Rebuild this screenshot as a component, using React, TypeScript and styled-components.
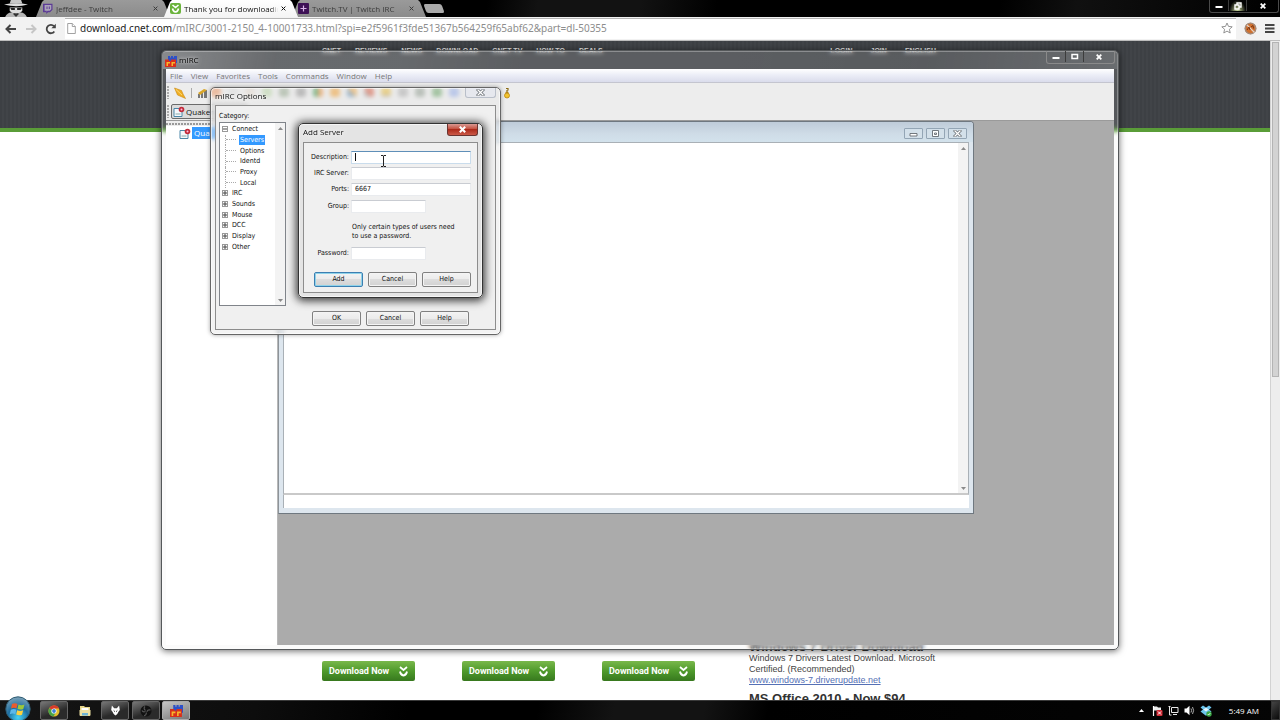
import React from "react";
import styled, { createGlobalStyle, css } from "styled-components";

const ui = `"Open Sans", "Noto Sans", sans-serif`;
const dialogFont = `"DejaVu Sans Condensed", "DejaVu Sans", sans-serif`;
const arial = `"Liberation Sans", Arial, sans-serif`;

const GlobalStyle = createGlobalStyle`
  * { box-sizing: border-box; }
  body { margin: 0; background: #000; font-family: ${ui}; font-size: 8px; color: #111; overflow: hidden; }
  button, input { font: inherit; color: inherit; margin: 0; padding: 0; border: 0; background: none; }
  ul { list-style: none; margin: 0; padding: 0; }
  svg { display: block; flex: none; }
`;

/* ---------- desktop ---------- */
const Desktop = styled.div`
  position: relative;
  display: flex;
  flex-direction: column;
  height: 100vh;
`;

const Browser = styled.section`
  flex: 1;
  min-height: 0;
  display: flex;
  flex-direction: column;
`;

/* ---------- browser chrome ---------- */
const TabStrip = styled.div`
  display: flex;
  align-items: flex-start;
  height: 17px;
  padding: 0 1px 0 4px;
  background: linear-gradient(100deg, #000 0 38%, #121212 42% 50%, #000 56% 78%, #101010 84%, #000);
`;

const Tabs = styled.div`
  display: flex;
  margin-left: 8px;
`;

const Tab = styled.div<{ $active?: boolean }>`
  display: flex;
  align-items: center;
  width: 134px;
  height: 17px;
  margin-right: -6px;
  padding: 0 12px 0 6px;
  position: relative;
  z-index: ${(p) => (p.$active ? 1 : 0)};
  clip-path: polygon(0 100%, 6px 2px, 8px 0, calc(100% - 8px) 0, calc(100% - 6px) 2px, 100% 100%);
  background: ${(p) => (p.$active ? "linear-gradient(#fff, #f4f4f4)" : "linear-gradient(#9a9a9a, #8b8b8b)")};
  color: ${(p) => (p.$active ? "#111" : "#3c3c3c")};
  font-size: 8px;
  line-height: 16px;
  gap: 3px;
`;

const TabTitle = styled.span`
  flex: 1;
  min-width: 0;
  white-space: nowrap;
  overflow: hidden;
  mask-image: linear-gradient(90deg, #000 92%, transparent);
`;

const PlainButton = styled.button`
  display: grid;
  place-items: center;
  cursor: pointer;
`;

const NewTab = styled.button`
  width: 18px;
  height: 9px;
  margin: 4px 0 0 5px;
  background: #aaa;
  border-radius: 2px;
  transform: skewX(20deg);
`;

const Caption = styled.div`
  display: flex;
  margin-left: auto;
  height: 13px;
  border: 1px solid #4a4a4a;
  border-top: 0;
  border-radius: 0 0 3px 3px;
`;

const CaptionButton = styled.button<{ $w: number; $glow?: boolean }>`
  display: grid;
  place-items: center;
  width: ${(p) => p.$w}px;
  height: 11px;
  color: #fff;
  & + & { border-left: 1px solid #3c3c3c; }
  ${(p) => p.$glow && css`background: radial-gradient(ellipse at 50% 110%, #d9e9a8, transparent 70%);`}
`;

const AddressRow = styled.div`
  display: flex;
  align-items: center;
  height: 24px;
  padding: 0 5px;
  gap: 8px;
  background: #f2f2f2;
  border-bottom: 1px solid #bdbdbd;
`;

const Omnibox = styled.div`
  flex: 1;
  display: flex;
  align-items: center;
  gap: 4px;
  height: 21px;
  padding: 0 3px 2px 2px;
  background: #fff;
  border-top: 1px solid #b5b5b5;
  font-family: "Noto Sans", sans-serif;
  font-size: 10px;
`;

const UrlText = styled.span`
  flex: 1;
  color: #8d8d8d;
  white-space: nowrap;
  b { font-weight: 400; color: #222; }
`;

/* ---------- web page ---------- */
const Viewport = styled.div`
  flex: 1;
  min-height: 0;
  display: flex;
`;

const Page = styled.main`
  flex: 1;
  min-width: 0;
  overflow: hidden;
  background: #fff;
`;

const SiteHeader = styled.header`
  display: flex;
  justify-content: space-between;
  height: 91px;
  padding: 6px 334px 0 322px;
  background: repeating-linear-gradient(90deg, #3d4044 0 2px, #414448 2px 4px);
  border-bottom: 4px solid #5a9d38;
  font: 700 7px/8px ${arial};
  color: #ececec;
`;

const SiteNav = styled.nav<{ $gap: number }>`
  display: flex;
  gap: ${(p) => p.$gap}px;
  a { color: inherit; text-decoration: none; }
`;

const Listing = styled.div`
  display: flex;
  padding: 509px 0 0 322px;
`;

const Downloads = styled.div`
  display: flex;
  gap: 47px;
  width: 427px;
  padding-top: 20px;
`;

const DownloadButton = styled.button`
  display: flex;
  align-items: center;
  justify-content: space-between;
  width: 93px;
  height: 20px;
  padding: 0 7px;
  border-radius: 2px;
  background: linear-gradient(#79b84b, #4f9a2c 50%, #37781e);
  color: #fff;
  font: 700 9px/20px Roboto, sans-serif;
`;

const Ads = styled.aside`
  font: 9px/11px ${arial};
  color: #444;
  white-space: nowrap;
  h3 { margin: 0; font-size: 13px; line-height: 12px; color: #333; }
  p { margin: 0; }
  a { color: #5570b5; }
  h3 + p { margin-bottom: 7px; }
`;

const ScrollTrack = styled.div`
  width: 10px;
  padding: 1px;
  background: #ededed;
  border-left: 1px solid #d2d2d2;
`;

const ScrollThumb = styled.div`
  height: 335px;
  background: #d3d3d3;
  border: 1px solid #b4b4b4;
`;

/* ---------- windows ---------- */
const AppWindow = styled.section`
  position: absolute;
  left: 161px;
  top: 50px;
  right: 161px;
  bottom: 70px;
  display: flex;
  flex-direction: column;
  padding: 0 4px 4px;
  border: 1px solid #55585a;
  border-radius: 5px;
  background: rgba(226, 226, 226, 0.14);
  backdrop-filter: blur(2px);
  box-shadow: inset 0 0 0 1px rgba(255, 255, 255, 0.3), 0 1px 7px rgba(0, 0, 0, 0.6);
`;

const AppTitle = styled.header`
  display: flex;
  align-items: flex-start;
  height: 18px;
  gap: 2px;
  margin: 0 -3px;
  padding: 0 2px;
  border-radius: 4px 4px 0 0;
  background: linear-gradient(100deg, rgba(255, 255, 255, 0.3), rgba(255, 255, 255, 0.1) 12% 25%, rgba(255, 255, 255, 0.03) 38% 60%, rgba(255, 255, 255, 0.02) 80%, rgba(255, 255, 255, 0.12));
  font-size: 8px;
  line-height: 18px;
  color: #000;
  svg { margin-top: 4px; }
`;

const TitleText = styled.span`
  text-shadow: 0 0 5px rgba(255, 255, 255, 0.8), 0 0 3px rgba(255, 255, 255, 0.5);
`;

const AppCaption = styled(Caption)`
  border-color: #8a8a8a;
  svg { margin: 0; }
  button { border-color: #777; }
`;

const AppBody = styled.div`
  flex: 1;
  min-height: 0;
  display: flex;
  flex-direction: column;
  background: #ededed;
`;

const MenuBar = styled.nav`
  display: flex;
  align-items: center;
  gap: 8px;
  height: 14px;
  padding-left: 4px;
  background: linear-gradient(#fff, #eef0f8 40%, #dadcec);
  border-bottom: 1px solid #c4c5cf;
  color: #777;
  font-size: 8px;
  line-height: 12px;
`;

const ToolBar = styled.div`
  display: flex;
  align-items: center;
  height: 19px;
  padding: 0 4px 0 1px;
`;

const Grip = styled.i<{ $gap: number }>`
  width: 3px;
  height: 13px;
  margin-right: ${(p) => p.$gap}px;
  background: radial-gradient(circle at 1px 1px, #aaa 1px, transparent 1px) 0 0 / 3px 3px;
`;

const ToolSet = styled.div`
  display: flex;
  gap: 7px;
  margin: 0 44px 0 2px;
`;

const ToolIcon = styled.button<{ $c: string }>`
  width: 10px;
  height: 9px;
  border-radius: 3px;
  background: ${(p) => p.$c};
`;

const Separator = styled.i`
  width: 1px;
  height: 10px;
  margin: 0 5px;
  background: #aaa;
`;

const SwitchBar = styled(ToolBar)`
  border-bottom: 1px solid #9a9a9a;
`;

const SwitchButton = styled.button`
  display: flex;
  align-items: center;
  gap: 1px;
  width: 76px;
  height: 15px;
  padding-left: 1px;
  border: 1px solid #6b6b6b;
  border-radius: 2px;
  background: #dcdcdc;
`;

const Workspace = styled.div`
  flex: 1;
  min-height: 0;
  display: flex;
`;

const TreePane = styled.aside`
  width: 112px;
  background: #fff;
  border-right: 1px solid #b8b8b8;
`;

const PaneGrip = styled.div`
  height: 5px;
  background: radial-gradient(circle at 1px 1px, #999 1px, transparent 1px) 0 2px / 3px 6px #ededed;
`;

const NetworkItem = styled.div`
  display: flex;
  align-items: center;
  gap: 1px;
  padding: 1px 0 0 13px;
  span { flex: none; width: 60px; padding-left: 2px; background: #3399ff; color: #fff; line-height: 12px; }
`;

const Mdi = styled.div`
  flex: 1;
  min-width: 0;
  background: #ababab;
`;

const ChildWindow = styled.section`
  display: flex;
  flex-direction: column;
  width: 696px;
  height: 393px;
  padding: 0 4px 5px;
  border: 1px solid #6f7880;
  border-left-color: #8d949a;
  border-radius: 0 4px 0 0;
  background: #dde6ee;
`;

const ChildTitle = styled.header`
  display: flex;
  justify-content: flex-end;
  align-items: center;
  gap: 3px;
  height: 20px;
  margin: 0 -4px;
  padding: 2px 6px 0 0;
  border-radius: 0 3px 0 0;
  background: linear-gradient(#bfccd9, #cfdce7 60%, #d3e2ec);
`;

const ChildButton = styled.button`
  display: grid;
  place-items: center;
  width: 19px;
  height: 11px;
  border: 1px solid #93a5b5;
  border-radius: 1px;
  background: #d3e0ea;
  color: #596670;
`;

const ChatArea = styled.div`
  flex: 1;
  display: flex;
  justify-content: flex-end;
  background: #fff;
  border: 1px solid #a9b0b6;
  border-bottom: 2px solid #c9c9c9;
`;

const ArrowBar = styled.div`
  display: flex;
  flex-direction: column;
  align-items: center;
  justify-content: space-between;
  width: 10px;
  padding: 4px 0 3px;
  background: #f3f3f3;
  color: #8a8a8a;
`;

const ChatInput = styled.input`
  width: 100%;
  height: 13px;
  background: #fff;
  border-left: 1px solid #a9b0b6;
`;

/* ---------- dialogs ---------- */
const Dialog = styled.section<{ $x: number; $y: number; $w: number; $h: number; $deep?: boolean }>`
  position: absolute;
  left: ${(p) => p.$x}px;
  top: ${(p) => p.$y}px;
  width: ${(p) => p.$w}px;
  height: ${(p) => p.$h}px;
  display: flex;
  flex-direction: column;
  padding: 0 4px 4px;
  border: 1px solid ${(p) => (p.$deep ? "#333" : "#666")};
  border-radius: 5px;
  background: ${(p) => (p.$deep ? "rgba(226, 226, 226, 0.85)" : "rgba(232, 232, 232, 0.5)")};
  backdrop-filter: blur(2px);
  box-shadow: inset 0 0 0 1px rgba(255, 255, 255, 0.6),
    ${(p) => (p.$deep ? "0 1px 9px 2px rgba(0, 0, 0, 0.75)" : "0 0 4px rgba(0, 0, 0, 0.35)")};
`;

const DialogTitle = styled.header`
  display: flex;
  justify-content: space-between;
  align-items: flex-start;
  height: 18px;
  font-size: 8px;
  color: #111;
  h2 { margin: 0; font: inherit; line-height: 16px; text-shadow: 0 0 5px #fff; }
`;

const DialogClose = styled.button<{ $red?: boolean }>`
  display: grid;
  place-items: center;
  width: 31px;
  height: ${(p) => (p.$red ? 12 : 10)}px;
  border-radius: 0 0 3px 3px;
  border: 1px solid ${(p) => (p.$red ? "#6b3430" : "#b9bfc9")};
  border-top: 0;
  color: ${(p) => (p.$red ? "#fff" : "#4c4c4c")};
  background: ${(p) => (p.$red ? "linear-gradient(#d99a93, #c5503f 45%, #ac2b1b 50%, #cc5a48)" : "rgba(226, 230, 240, 0.6)")};
`;

const DialogBody = styled.div`
  flex: 1;
  display: flex;
  flex-direction: column;
  background: #f0f0f0;
  border: 1px solid #8d8d8d;
  font-family: ${dialogFont};
  font-size: 7px;
  line-height: 9px;
`;

const OptionsBody = styled(DialogBody)`
  padding: 6px 3px 3px;
`;

const CategoryBox = styled.div`
  display: flex;
  justify-content: space-between;
  width: 67px;
  height: 184px;
  margin-top: 1px;
  border: 1px solid #80848a;
  background: #fff;
`;

const CategoryTree = styled.ul`
  display: grid;
  grid-auto-rows: 1fr;
  height: 129px;
  padding: 1px 0 0 2px;
`;

const Node = styled.li<{ $child?: boolean; $selected?: boolean }>`
  display: flex;
  align-items: center;
  gap: 3px;
  ${(p) => p.$child && css`
    margin-left: 3px;
    border-left: 1px dotted #aaa;
    &::before { content: ""; width: 10px; border-top: 1px dotted #aaa; }
  `}
  span { padding: 0 1px; line-height: 10px; ${(p) => p.$selected && css`background: #3399ff; color: #fff;`} }
`;

const Expander = styled.button`
  display: grid;
  place-items: center;
  width: 6px;
  height: 6px;
  border: 1px solid #999;
  background: #fff;
`;

const ButtonRow = styled.div<{ $left: number; $top: number }>`
  display: flex;
  gap: 5px;
  margin: ${(p) => p.$top}px 0 0 ${(p) => p.$left}px;
`;

const PushButton = styled.button<{ $primary?: boolean }>`
  width: 49px;
  height: 15px;
  border: 1px solid ${(p) => (p.$primary ? "#3c7fb1" : "#808080")};
  border-radius: 2px;
  background: linear-gradient(#f3f3f3, #ebebeb 50%, #dddddd 50%, #d2d2d2);
  box-shadow: inset 0 0 0 1px ${(p) => (p.$primary ? "#8fd3ea" : "#f4f4f4")};
  text-align: center;
`;

const Form = styled.form`
  display: grid;
  grid-template-columns: 45px 120px;
  grid-template-rows: 16px 16px 16px 18px;
  column-gap: 2px;
  align-items: center;
  padding-top: 6px;
  label { text-align: right; white-space: nowrap; justify-self: end; }
`;

const TextBox = styled.input<{ $short?: boolean }>`
  width: ${(p) => (p.$short ? 75 : 120)}px;
  height: 13px;
  padding: 0 3px;
  background: #fff;
  border: 1px solid #e9ebee;
  border-top-color: #c9ccd2;
  outline: 0;
  &:focus, &#desc { border-color: #c9dcec; border-top-color: #5f8fb8; }
`;

const CaretField = styled.div`
  position: relative;
`;

const Caret = styled.i`
  position: absolute;
  left: 4px;
  top: 2px;
  width: 1px;
  height: 8px;
  background: #111;
`;

const IBeam = styled.svg`
  position: absolute;
  left: 29px;
  top: 4px;
`;

const Note = styled.p`
  grid-column: 2;
  margin: 8px 0 6px 1px;
`;

/* ---------- taskbar ---------- */
const Taskbar = styled.footer`
  position: relative;
  display: flex;
  align-items: center;
  height: 20px;
  padding-left: 5px;
  background: linear-gradient(100deg, #151515, #0d0d0d 20%, #000 32% 42%, #131313 48% 55%, #000 60%, #050505);
  border-top: 1px solid #3a3a3a;
  color: #fff;
`;

const StartOrb = styled.button`
  width: 26px;
  height: 26px;
  margin: -4px 9px 0 0;
`;

const TaskButton = styled.button<{ $state?: "open" | "active" }>`
  display: grid;
  place-items: center;
  width: 28px;
  height: 19px;
  ${(p) => p.$state && css`
    border: 1px solid ${p.$state === "active" ? "#aaa" : "#666"};
    border-radius: 2px;
    background: ${p.$state === "active" ? "linear-gradient(160deg, #c5c5c5, #777)" : "linear-gradient(160deg, #777, #2a2a2a 60%)"};
  `}
`;

const TaskButtons = styled.div`
  display: flex;
  justify-content: space-between;
  width: 150px;
`;

const Tray = styled.div`
  display: flex;
  align-items: center;
  gap: 5px;
  height: 100%;
  margin-left: auto;
  time { margin: 0 7px 0 12px; font-size: 8px; white-space: nowrap; }
`;

const ShowHidden = styled.button`
  margin-right: 3px;
`;

const ShowDesktop = styled.button`
  width: 9px;
  height: 19px;
  background: linear-gradient(135deg, #444, #0a0a0a);
  border: 1px solid #333;
`;

/* ---------- icons ---------- */
const Cross = ({ s = 6, w = 1.6 }: { s?: number; w?: number }) => (
  <svg width={s} height={s} viewBox="0 0 6 6" stroke="currentColor" strokeWidth={w}>
    <path d="M.7.7l4.600 4.600M5.300.7L.7 5.300" />
  </svg>
);
const OutlineCross = () => (
  <svg width="9" height="7" viewBox="0 0 9 7">
    <path d="M2 1l5 5M7 1l-5 5" stroke="#646a70" strokeWidth="2.800" strokeLinecap="square" />
    <path d="M2 1l5 5M7 1l-5 5" stroke="#fff" strokeWidth="1.300" strokeLinecap="square" />
  </svg>
);
const OutlineMin = () => (
  <svg width="9" height="7" viewBox="0 0 9 7"><path d="M1 3.500h7v2.500H1z" fill="#fff" stroke="#646a70" strokeWidth=".9" /></svg>
);
const OutlineMax = () => (
  <svg width="9" height="7" viewBox="0 0 9 7"><path d="M1.500.5h6v6h-6zM3.500 3h2v1.500h-2z" fill="#fff" stroke="#646a70" strokeWidth=".9" /></svg>
);
const Min = () => (
  <svg width="8" height="7" viewBox="0 0 8 7"><path d="M.5 4h7v2h-7z" fill="currentColor" /></svg>
);
const Max = () => (
  <svg width="8" height="7" viewBox="0 0 8 7"><path d="M1 1.500h5.500v4H1z" fill="none" stroke="currentColor" strokeWidth="1.500" /></svg>
);
const Restore = () => (
  <svg width="8" height="8" viewBox="0 0 8 8" fill="none" stroke="currentColor" strokeWidth="1.400">
    <path d="M1 3h4v4H1zM3 3V1h4v4H5" />
  </svg>
);
const Tri = ({ down }: { down?: boolean }) => (
  <svg width="5" height="3" viewBox="0 0 5 3"><path d={down ? "M0 0h5L2.500 3z" : "M0 3h5L2.500 0z"} fill="currentColor" /></svg>
);
const Incognito = () => (
  <svg width="24" height="17" viewBox="0 0 21 17" preserveAspectRatio="none">
    <path d="M6 0h9l1 3.500H5z" fill="#c8c8c8" />
    <path d="M0 4.500q10.500-2.500 21 0-10 3.500-21 0z" fill="#dedede" />
    <path d="M5 7.500h11v3q-1 3-5.500 3T5 10.500z" fill="#ddd" />
    <path d="M5.500 8h4v2h-3zM11.500 8h4l-1 2h-3z" fill="#222" />
    <path d="M1 17q2-5 6-4.500l3.500 2.500 3.500-2.500q4-.5 6 4.500z" fill="#b5b5b5" />
    <path d="M8 14l2.500 3 2.500-3" fill="#333" />
  </svg>
);
const TwitchIcon = () => (
  <svg width="11" height="11" viewBox="0 0 11 11">
    <path d="M1 .8h9.500v6L8 9.200H6L4.300 11V9.200H1z" fill="#5c3b96" />
    <path d="M2.600 2h6.700v4.200L7.800 7.700H5.600L4.600 8.700v-1h-2z" fill="#aaa2b8" />
    <path d="M5 3.500v2.500M7.300 3.500v2.500" stroke="#5c3b96" />
  </svg>
);
const CnetIcon = () => (
  <svg width="11" height="11" viewBox="0 0 11 11">
    <rect width="11" height="11" rx="2" fill="#6bb33c" />
    <path d="M2.500 2l3 2.500 3-2.500M2.500 5.500q.5 3 3 3.500 2.500-.5 3-3.500" fill="none" stroke="#fff" strokeWidth="1.600" />
  </svg>
);
const PlusIcon = () => (
  <svg width="11" height="11" viewBox="0 0 11 11">
    <rect width="11" height="11" rx="1" fill="#3d1155" />
    <path d="M5.500 2.500v6M2.500 5.500h6" stroke="#d9b5ea" strokeWidth="1.200" />
  </svg>
);
const Arrow = ({ back }: { back?: boolean }) => (
  <svg width="12" height="10" viewBox="0 0 12 10" fill="none" stroke={back ? "#444" : "#c6c6c6"} strokeWidth="2">
    <path d={back ? "M11 5H2M5.500 1L1.500 5l4 4" : "M1 5h9M6.500 1l4 4-4 4"} />
  </svg>
);
const Reload = () => (
  <svg width="12" height="12" viewBox="0 0 12 12">
    <path d="M9.300 8.500A4.200 4.200 0 1 1 9 3.200" fill="none" stroke="#444" strokeWidth="1.800" />
    <path d="M10.800.8v4.400H6.400z" fill="#444" />
  </svg>
);
const PageIcon = () => (
  <svg width="9" height="11" viewBox="0 0 9 11" fill="#fff" stroke="#999" strokeWidth=".9">
    <path d="M.7.500h4.600L8.300 3.500v7H.7z" /><path d="M5.300.5v3h3" />
  </svg>
);
const Star = () => (
  <svg width="12" height="12" viewBox="0 0 12 12">
    <path d="M6 1l1.500 3.400 3.700.4-2.800 2.500.8 3.700L6 9.100 2.800 11l.8-3.700L.8 4.800l3.700-.4z" fill="#fff" stroke="#888" strokeWidth=".9" />
  </svg>
);
const Cookie = () => (
  <svg width="13" height="13" viewBox="0 0 13 13">
    <circle cx="6.500" cy="6.500" r="5.800" fill="#d0712f" />
    <circle cx="6.500" cy="6.500" r="5.300" fill="none" stroke="#a08a7c" strokeWidth="1.300" />
    <path d="M3 3l7.500 7.500" stroke="#e6d2c4" strokeWidth="1.300" />
    <path d="M3 8l2-3 1 3M7 5l2-1.500.5 3" stroke="#7a3410" strokeWidth="1" fill="none" />
  </svg>
);
const MenuIcon = () => (
  <svg width="10" height="9" viewBox="0 0 10 9"><path d="M0 1h9.500M0 4.500h9.500M0 8h9.500" stroke="#444" strokeWidth="2" /></svg>
);
const MircIcon = ({ s = 11 }: { s?: number }) => (
  <svg width={s} height={s} viewBox="0 0 12 12">
    <path d="M3 1h2v1.500h1V1h2v1.500h1V1h3v7H3z" fill="#2d50c8" />
    <path d="M0 4.500h4V6h2V4.500h5V12H0z" fill="#d8301c" />
    <path d="M1.500 7H5v1.500H3V11H1.500zM6.500 7H10v1.500H8V11H6.500z" fill="#f7b52c" />
  </svg>
);
const Feather = () => (
  <svg width="12" height="12" viewBox="0 0 12 12">
    <path d="M.5 1l7 2.500L9 7l2.500 4.500L7 9.500 3.500 8z" fill="#f0ae22" stroke="#c98a14" strokeWidth=".6" />
    <path d="M2 2.500l6 5.500" stroke="#fbe08a" strokeWidth=".8" />
  </svg>
);
const ChartIcon = () => (
  <svg width="12" height="10" viewBox="0 0 12 10">
    <path d="M1 6h2v4H1zM4 4h2v6H4zM7 2h3v8H7z" fill="#777" /><path d="M1 5l6-4 3 1-7 5z" fill="#d9a528" />
  </svg>
);
const StatusIcon = () => (
  <svg width="12" height="11" viewBox="0 0 12 11">
    <path d="M1 2.500h8v8H1z" fill="#f5f8fb" stroke="#4b87a8" /><path d="M2.500 8h5" stroke="#8aa" />
    <circle cx="8.500" cy="3.500" r="2.800" fill="#c22c3a" /><circle cx="8.500" cy="3.500" r="1" fill="#fbd" />
  </svg>
);
const KeyIcon = () => (
  <svg width="8" height="12" viewBox="0 0 8 12">
    <circle cx="4" cy="8.500" r="2.500" fill="#f2c42e" stroke="#b98512" strokeWidth=".8" />
    <path d="M2.500 5.500h3" stroke="#b98512" strokeWidth="1.200" />
    <path d="M4 5V3M3 1.500h2v2" stroke="#8a6a14" strokeWidth="1.200" fill="none" />
  </svg>
);
const DoubleDown = () => (
  <svg width="9" height="11" viewBox="0 0 9 11" fill="none" stroke="#fff" strokeWidth="1.800">
    <path d="M1 1l3.500 3L8 1" /><path d="M1 5.500q.5 3.500 3.500 4 3-.5 3.500-4" />
  </svg>
);
const Orb = () => (
  <svg width="26" height="26" viewBox="0 0 26 26">
    <defs>
      <radialGradient id="orb" cx="50%" cy="85%" r="85%">
        <stop offset="0" stopColor="#46d3f5" /><stop offset=".5" stopColor="#1c6ea2" /><stop offset="1" stopColor="#7fa3b8" />
      </radialGradient>
    </defs>
    <circle cx="13" cy="13" r="12.200" fill="url(#orb)" stroke="#2d5b72" strokeWidth="1" />
    <path d="M7 8q3-1.500 5.500 0l-1 4.500q-2.500-1.500-5.500 0z" fill="#ea5b2d" />
    <path d="M13.500 8.500q3 1.500 6 0l-1.200 4.500q-3 1.300-5.800-.2z" fill="#9cc83c" />
    <path d="M5.800 13.700q3-1.500 5.500 0l-1 4.500q-2.500-1.500-5.500 0z" fill="#5bb8ea" />
    <path d="M12.200 14.200q3 1.500 6 0L17 18.700q-3 1.300-5.800-.2z" fill="#fbd13e" />
  </svg>
);
const Chrome = () => (
  <svg width="12" height="12" viewBox="0 0 12 12">
    <circle cx="6" cy="6" r="5.500" fill="#e2bf2c" />
    <path d="M6 6L1.200 3.200A5.500 5.500 0 0 1 11 3.500H6z" fill="#d93a2b" />
    <path d="M6 6L1.200 3.200A5.500 5.500 0 0 0 5.500 11.500L8 7z" fill="#48a347" />
    <circle cx="6" cy="6" r="2.600" fill="#fff" /><circle cx="6" cy="6" r="1.900" fill="#3d7fd6" />
  </svg>
);
const Folder = () => (
  <svg width="12" height="11" viewBox="0 0 12 11">
    <path d="M1 1h4l1 1h5v9H1z" fill="#e5d58a" /><path d="M2.500 3h7v4h-7z" fill="#fff" /><path d="M.5 5h11v5.500H.5z" fill="#efe2a3" /><path d="M3 8h6v2.500H3z" fill="#6fb5d6" />
  </svg>
);
const Fox = () => (
  <svg width="9" height="11" viewBox="0 0 10 11">
    <path d="M1 0l2.500 3h3L9 0l.8 5-1.300 1.500L7 9.500 5 11 3 9.500 1.500 6.500.2 5z" fill="#fff" /><path d="M2.500 4.500l2 2-.5 1zM7.500 4.500l-2 2 .5 1z" fill="#222" />
  </svg>
);
const Obs = () => (
  <svg width="12" height="12" viewBox="0 0 12 12">
    <circle cx="6" cy="6" r="5.500" fill="#111" />
    <path d="M5 1.500q-2 2 .5 4M10.500 5q-2.700-.7-3.700 1.700M4 10.500q2 .3 2.500-3M2 5.500q1 2 3.500 1" fill="none" stroke="#555" strokeWidth="1.200" />
  </svg>
);
const Flag = () => (
  <svg width="11" height="11" viewBox="0 0 11 11">
    <path d="M1.500 1v10" stroke="#fff" strokeWidth="1.200" /><path d="M2 1.500h3l1 1h3v4H6l-1-1H2z" fill="#eee" />
    <rect x="4.500" y="5" width="6" height="6" rx="1" fill="#d42a35" /><path d="M6 6.500l3 3M9 6.500l-3 3" stroke="#fff" />
  </svg>
);
const Network = () => (
  <svg width="11" height="11" viewBox="0 0 11 11" fill="none" stroke="#e8e8e8">
    <path d="M3.500 2.500h6.500v5H3.500zM5 9.500h4M1.500 1v4M.5 1.500h2M1.500 5v5h2" />
  </svg>
);
const Volume = () => (
  <svg width="11" height="11" viewBox="0 0 11 11">
    <path d="M.5 3.500h2L5.500.8v9.400L2.500 7.500h-2z" fill="#fff" /><path d="M7 3.500q1.200 2 0 4M8.500 2q2.200 3.500 0 7" fill="none" stroke="#bbb" strokeWidth=".9" />
  </svg>
);
const Dropbox = () => (
  <svg width="12" height="12" viewBox="0 0 12 12">
    <path d="M3 .5l3 2 3-2 2.500 2L9 4.500l2.500 2L9 8.500l-3 2.300-3-2.300L.5 6.500 3 4.500.5 2.500z" fill="#6cc4ec" /><path d="M6 2.800l2.800 1.800L6 6.500 3.200 4.600z" fill="#e9f7ff" />
    <circle cx="9" cy="9" r="2.700" fill="#3ba845" /><path d="M7.700 9l1 1 1.600-2" fill="none" stroke="#fff" strokeWidth=".8" />
  </svg>
);

/* ---------- data ---------- */
const menu = ["File", "View", "Favorites", "Tools", "Commands", "Window", "Help"];
const toolColors = ["#ee8a4f", "#dcdcdc", "#e2d8cc", "#b5d6a0", "#8fa387", "#8d8d8d", "linear-gradient(90deg, #1f8a35 40%, #f0801e 60%)", "#f29a24", "linear-gradient(45deg, #4c83b5 35%, #f5a02c 60%)", "linear-gradient(45deg, #999 20%, #d8492a 50%)", "linear-gradient(#eab82c 60%, #999)", "#a8a8a8", "#8b988b", "#5f9f5c", "#8ea8ea"];
const subCategories = ["Servers", "Options", "Identd", "Proxy", "Local"];
const categories = ["IRC", "Sounds", "Mouse", "DCC", "Display", "Other"];

const TabItem = ({ icon, title, active }: { icon: React.ReactNode; title: string; active?: boolean }) => (
  <Tab $active={active}>
    {icon}
    <TabTitle>{title}</TabTitle>
    <PlainButton aria-label={`Close ${title}`}><Cross s={5} w={1.2} /></PlainButton>
  </Tab>
);

const BrowserWindow = () => (
  <Browser>
    <TabStrip>
      <Incognito />
      <Tabs>
        <TabItem icon={<TwitchIcon />} title="Jeffdee - Twitch" />
        <TabItem icon={<CnetIcon />} title="Thank you for downloadin" active />
        <TabItem icon={<PlusIcon />} title="Twitch.TV | Twitch IRC" />
      </Tabs>
      <NewTab aria-label="New tab" />
      <Caption>
        <CaptionButton $w={18} aria-label="Minimize"><Min /></CaptionButton>
        <CaptionButton $w={18} $glow aria-label="Restore"><Restore /></CaptionButton>
        <CaptionButton $w={32} aria-label="Close"><Cross w={1.8} /></CaptionButton>
      </Caption>
    </TabStrip>
    <AddressRow>
      <PlainButton aria-label="Back"><Arrow back /></PlainButton>
      <PlainButton aria-label="Forward"><Arrow /></PlainButton>
      <PlainButton aria-label="Reload"><Reload /></PlainButton>
      <Omnibox>
        <PageIcon />
        <UrlText><b>download.cnet.com</b>/mIRC/3001-2150_4-10001733.html?spi=e2f5961f3fde51367b564259f65abf62&amp;part=dl-50355</UrlText>
        <PlainButton aria-label="Bookmark"><Star /></PlainButton>
      </Omnibox>
      <PlainButton aria-label="Extension"><Cookie /></PlainButton>
      <PlainButton aria-label="Menu"><MenuIcon /></PlainButton>
    </AddressRow>
    <Viewport>
      <Page>
        <SiteHeader>
          <SiteNav $gap={14}>
            {["CNET", "REVIEWS", "NEWS", "DOWNLOAD", "CNET TV", "HOW TO", "DEALS"].map((t) => <a key={t} href="#">{t}</a>)}
          </SiteNav>
          <SiteNav $gap={18}>
            {["LOGIN", "JOIN", "ENGLISH"].map((t) => <a key={t} href="#">{t}</a>)}
          </SiteNav>
        </SiteHeader>
        <Listing>
          <Downloads>
            {[0, 1, 2].map((i) => <DownloadButton key={i}>Download Now<DoubleDown /></DownloadButton>)}
          </Downloads>
          <Ads>
            <h3>Windows 7 Driver Download</h3>
            <p>Windows 7 Drivers Latest Download. Microsoft<br />Certified. (Recommended)<br /><a href="#">www.windows-7.driverupdate.net</a></p>
            <h3>MS Office 2010 - Now $94</h3>
          </Ads>
        </Listing>
      </Page>
      <ScrollTrack><ScrollThumb /></ScrollTrack>
    </Viewport>
  </Browser>
);

const MircWindow = () => (
  <AppWindow>
    <AppTitle>
      <MircIcon s={12} />
      <TitleText>mIRC</TitleText>
      <AppCaption>
        <CaptionButton $w={18} aria-label="Minimize"><Min /></CaptionButton>
        <CaptionButton $w={18} aria-label="Maximize"><Max /></CaptionButton>
        <CaptionButton $w={31} aria-label="Close"><Cross w={1.8} /></CaptionButton>
      </AppCaption>
    </AppTitle>
    <AppBody>
      <MenuBar>{menu.map((m) => <span key={m}>{m}</span>)}</MenuBar>
      <ToolBar>
        <Grip $gap={4} />
        <Feather />
        <Separator />
        <ChartIcon />
        <ToolSet>
          {toolColors.map((c, i) => <ToolIcon key={i} $c={c} aria-label={`Tool ${i + 1}`} />)}
        </ToolSet>
        <KeyIcon />
      </ToolBar>
      <SwitchBar>
        <Grip $gap={1} />
        <SwitchButton><StatusIcon />Quaken</SwitchButton>
      </SwitchBar>
      <Workspace>
        <TreePane>
          <PaneGrip />
          <NetworkItem><StatusIcon /><span>Qual</span></NetworkItem>
        </TreePane>
        <Mdi>
          <ChildWindow>
            <ChildTitle>
              <ChildButton aria-label="Minimize"><OutlineMin /></ChildButton>
              <ChildButton aria-label="Maximize"><OutlineMax /></ChildButton>
              <ChildButton aria-label="Close"><OutlineCross /></ChildButton>
            </ChildTitle>
            <ChatArea><ArrowBar><Tri /><Tri down /></ArrowBar></ChatArea>
            <ChatInput aria-label="Message" />
          </ChildWindow>
        </Mdi>
      </Workspace>
    </AppBody>
  </AppWindow>
);

const OptionsDialog = () => (
  <Dialog $x={210} $y={87} $w={291} $h={248}>
    <DialogTitle>
      <h2>mIRC Options</h2>
      <DialogClose aria-label="Close options"><OutlineCross /></DialogClose>
    </DialogTitle>
    <OptionsBody>
      <span>Category:</span>
      <CategoryBox>
        <CategoryTree>
          <Node><Expander aria-label="Collapse"><svg width="4" height="4" stroke="#444"><path d="M0 2h4" /></svg></Expander><span>Connect</span></Node>
          {subCategories.map((c, i) => <Node key={c} $child $selected={i === 0}><span>{c}</span></Node>)}
          {categories.map((c) => (
            <Node key={c}><Expander aria-label={`Expand ${c}`}><svg width="4" height="4" stroke="#444"><path d="M0 2h4M2 0v4" /></svg></Expander><span>{c}</span></Node>
          ))}
        </CategoryTree>
        <ArrowBar><Tri /><Tri down /></ArrowBar>
      </CategoryBox>
      <ButtonRow $left={93} $top={5}>
        <PushButton>OK</PushButton>
        <PushButton>Cancel</PushButton>
        <PushButton>Help</PushButton>
      </ButtonRow>
    </OptionsBody>
  </Dialog>
);

const AddServerDialog = () => (
  <Dialog $x={298} $y={123} $w={185} $h={175} $deep>
    <DialogTitle>
      <h2>Add Server</h2>
      <DialogClose $red aria-label="Close add server"><Cross s={7} w={1.8} /></DialogClose>
    </DialogTitle>
    <DialogBody>
      <Form>
        <label htmlFor="desc">Description:</label>
        <CaretField>
          <TextBox id="desc" />
          <Caret />
          <IBeam width="7" height="12" viewBox="0 0 7 12" fill="none" stroke="#222"><path d="M1 .5h2l.5.500.5-.5h2M1 11.500h2l.5-.5.5.500h2M3.500 1v10" /></IBeam>
        </CaretField>
        <label htmlFor="server">IRC Server:</label>
        <TextBox id="server" />
        <label htmlFor="ports">Ports:</label>
        <TextBox id="ports" defaultValue="6667" />
        <label htmlFor="group">Group:</label>
        <TextBox id="group" $short />
        <Note>Only certain types of users need<br />to use a password.</Note>
        <label htmlFor="password">Password:</label>
        <TextBox id="password" type="password" $short />
      </Form>
      <ButtonRow $left={10} $top={12}>
        <PushButton $primary>Add</PushButton>
        <PushButton>Cancel</PushButton>
        <PushButton>Help</PushButton>
      </ButtonRow>
    </DialogBody>
  </Dialog>
);

export default function App() {
  return (
    <>
      <GlobalStyle />
      <Desktop>
        <BrowserWindow />
        <MircWindow />
        <OptionsDialog />
        <AddServerDialog />
        <Taskbar>
          <StartOrb aria-label="Start"><Orb /></StartOrb>
          <TaskButtons>
            <TaskButton $state="open" aria-label="Chrome"><Chrome /></TaskButton>
            <TaskButton aria-label="Explorer"><Folder /></TaskButton>
            <TaskButton $state="open" aria-label="foobar2000"><Fox /></TaskButton>
            <TaskButton $state="open" aria-label="OBS"><Obs /></TaskButton>
            <TaskButton $state="active" aria-label="mIRC"><MircIcon s={13} /></TaskButton>
          </TaskButtons>
          <Tray>
            <ShowHidden aria-label="Show hidden icons"><Tri /></ShowHidden>
            <Flag />
            <Network />
            <Volume />
            <Dropbox />
            <time>5:49 AM</time>
            <ShowDesktop aria-label="Show desktop" />
          </Tray>
        </Taskbar>
      </Desktop>
    </>
  );
}
